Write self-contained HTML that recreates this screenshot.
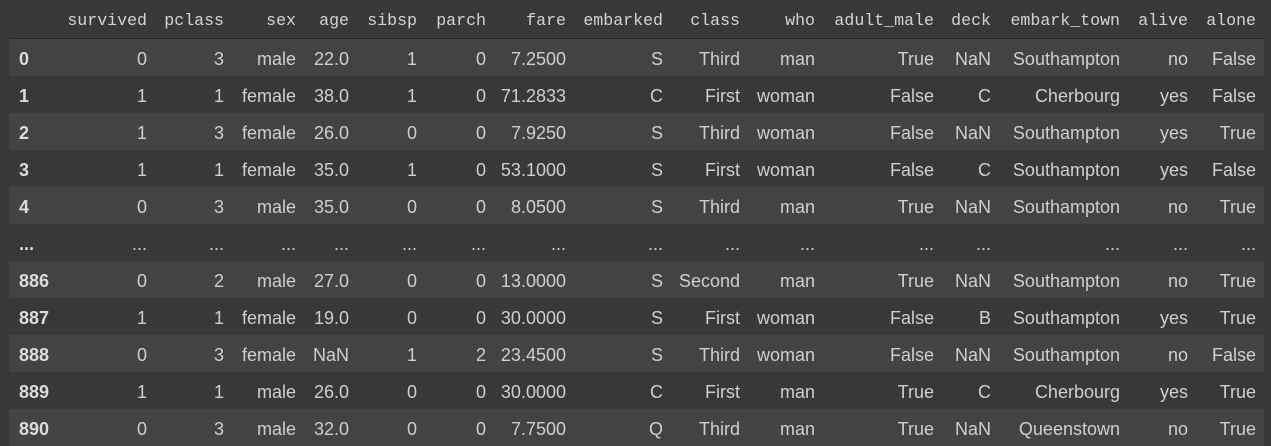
<!DOCTYPE html>
<html><head><meta charset="utf-8"><style>
body{margin:0;background:#383838;width:1271px;height:446px;overflow:hidden}
table{position:absolute;left:9px;top:0;border-collapse:collapse;table-layout:fixed;color:#cfcfcf;font-family:"Liberation Sans",sans-serif;font-size:18px}
td,th{padding:0;text-align:right;white-space:nowrap;overflow:visible}
thead th{height:36px;box-sizing:content-box;font-family:"Liberation Mono",monospace;font-weight:normal;font-size:16.6px;border-bottom:1px solid #252525;vertical-align:middle;padding-top:2px;color:#d4d4d4}
tbody tr{height:37px}
tbody td,tbody th{padding-top:4px}
tbody tr:nth-child(odd){background:#434343}
tbody th{text-align:left;padding-left:10px;font-weight:bold;color:#dcdcdc}
</style></head><body>
<table>
<colgroup><col style="width:51px"><col style="width:87px"><col style="width:77px"><col style="width:72px"><col style="width:53px"><col style="width:68px"><col style="width:69px"><col style="width:80px"><col style="width:97px"><col style="width:77px"><col style="width:75px"><col style="width:119px"><col style="width:57px"><col style="width:129px"><col style="width:68px"><col style="width:68px"><col style="width:8px"></colgroup>
<thead><tr><th></th><th>survived</th><th>pclass</th><th>sex</th><th>age</th><th>sibsp</th><th>parch</th><th>fare</th><th>embarked</th><th>class</th><th>who</th><th>adult_male</th><th>deck</th><th>embark_town</th><th>alive</th><th>alone</th><th></th></tr></thead>
<tbody>
<tr><th>0</th><td>0</td><td>3</td><td>male</td><td>22.0</td><td>1</td><td>0</td><td>7.2500</td><td>S</td><td>Third</td><td>man</td><td>True</td><td>NaN</td><td>Southampton</td><td>no</td><td>False</td><td></td></tr>
<tr><th>1</th><td>1</td><td>1</td><td>female</td><td>38.0</td><td>1</td><td>0</td><td>71.2833</td><td>C</td><td>First</td><td>woman</td><td>False</td><td>C</td><td>Cherbourg</td><td>yes</td><td>False</td><td></td></tr>
<tr><th>2</th><td>1</td><td>3</td><td>female</td><td>26.0</td><td>0</td><td>0</td><td>7.9250</td><td>S</td><td>Third</td><td>woman</td><td>False</td><td>NaN</td><td>Southampton</td><td>yes</td><td>True</td><td></td></tr>
<tr><th>3</th><td>1</td><td>1</td><td>female</td><td>35.0</td><td>1</td><td>0</td><td>53.1000</td><td>S</td><td>First</td><td>woman</td><td>False</td><td>C</td><td>Southampton</td><td>yes</td><td>False</td><td></td></tr>
<tr><th>4</th><td>0</td><td>3</td><td>male</td><td>35.0</td><td>0</td><td>0</td><td>8.0500</td><td>S</td><td>Third</td><td>man</td><td>True</td><td>NaN</td><td>Southampton</td><td>no</td><td>True</td><td></td></tr>
<tr><th>...</th><td>...</td><td>...</td><td>...</td><td>...</td><td>...</td><td>...</td><td>...</td><td>...</td><td>...</td><td>...</td><td>...</td><td>...</td><td>...</td><td>...</td><td>...</td><td></td></tr>
<tr><th>886</th><td>0</td><td>2</td><td>male</td><td>27.0</td><td>0</td><td>0</td><td>13.0000</td><td>S</td><td>Second</td><td>man</td><td>True</td><td>NaN</td><td>Southampton</td><td>no</td><td>True</td><td></td></tr>
<tr><th>887</th><td>1</td><td>1</td><td>female</td><td>19.0</td><td>0</td><td>0</td><td>30.0000</td><td>S</td><td>First</td><td>woman</td><td>False</td><td>B</td><td>Southampton</td><td>yes</td><td>True</td><td></td></tr>
<tr><th>888</th><td>0</td><td>3</td><td>female</td><td>NaN</td><td>1</td><td>2</td><td>23.4500</td><td>S</td><td>Third</td><td>woman</td><td>False</td><td>NaN</td><td>Southampton</td><td>no</td><td>False</td><td></td></tr>
<tr><th>889</th><td>1</td><td>1</td><td>male</td><td>26.0</td><td>0</td><td>0</td><td>30.0000</td><td>C</td><td>First</td><td>man</td><td>True</td><td>C</td><td>Cherbourg</td><td>yes</td><td>True</td><td></td></tr>
<tr><th>890</th><td>0</td><td>3</td><td>male</td><td>32.0</td><td>0</td><td>0</td><td>7.7500</td><td>Q</td><td>Third</td><td>man</td><td>True</td><td>NaN</td><td>Queenstown</td><td>no</td><td>True</td><td></td></tr>
</tbody></table>
</body></html>
